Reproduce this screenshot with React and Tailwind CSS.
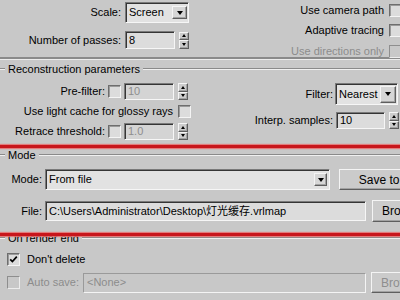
import React from "react";

const sunken =
  "border border-t-[#7a7a7a] border-l-[#7a7a7a] border-b-[#f6f6f6] border-r-[#f6f6f6] shadow-[inset_1px_1px_0_#353535]";
const raised =
  "border border-t-[#f4f4f4] border-l-[#f4f4f4] border-b-[#5e5e5e] border-r-[#5e5e5e] shadow-[inset_-1px_-1px_0_#a2a2a2]";

function Etched({ className = "" }) {
  return (
    <div
      className={
        "h-[2px] border-t border-t-[#8a8a8a] border-b border-b-[#f0f0f0] " +
        className
      }
    />
  );
}

function GroupTitle({ title, className = "" }) {
  return (
    <div className={"flex items-center h-[12px] " + className}>
      <Etched className="w-[5px] shrink-0" />
      <span className="ml-[3px] mr-[3px] whitespace-nowrap">{title}</span>
      <Etched className="flex-1" />
    </div>
  );
}

function Checkbox({ checked = false, disabled = false, className = "" }) {
  return (
    <div
      className={
        "w-[13px] h-[13px] shrink-0 flex items-center justify-center border " +
        (disabled
          ? "border-t-[#8e8e8e] border-l-[#8e8e8e] border-b-[#ececec] border-r-[#ececec] bg-[#c8c8c8] "
          : "border-t-[#6e6e6e] border-l-[#6e6e6e] border-b-[#f4f4f4] border-r-[#f4f4f4] shadow-[inset_1px_1px_0_#9a9a9a] bg-[#dcdcdc] ") +
        className
      }
    >
      {checked && (
        <svg width="9" height="9" viewBox="0 0 9 9">
          <path
            d="M1.2 4.3 L3.4 6.6 L7.8 1.6"
            fill="none"
            stroke="#000"
            strokeWidth="1.7"
          />
        </svg>
      )}
    </div>
  );
}

function DownTri() {
  return (
    <div className="w-0 h-0 border-l-[3.5px] border-r-[3.5px] border-t-[4px] border-l-transparent border-r-transparent border-t-black" />
  );
}

function Dropdown({ value, className = "", arrowClass = "" }) {
  return (
    <div
      className={
        "flex items-center shrink-0 bg-[#e2e2e2] " + sunken + " " + className
      }
    >
      <span className="flex-1 pl-[3px] whitespace-nowrap overflow-hidden">
        {value}
      </span>
      <div
        className={
          "flex items-center justify-center bg-[#d6d6d6] " +
          raised +
          " " +
          arrowClass
        }
      >
        <DownTri />
      </div>
    </div>
  );
}

function Input({ value, disabled = false, className = "" }) {
  return (
    <div
      className={
        "flex items-center shrink-0 pl-[3px] whitespace-nowrap overflow-hidden " +
        sunken +
        " " +
        (disabled ? "bg-[#d4d4d4] text-[#8e8e8e] " : "bg-[#dcdcdc] ") +
        className
      }
    >
      {value}
    </div>
  );
}

function Spinner({ className = "" }) {
  return (
    <div className={"flex flex-col w-[10px] h-[17px] shrink-0 " + className}>
      <div
        className={
          "flex-1 flex items-center justify-center bg-[#cccccc] " + raised
        }
      >
        <div className="w-0 h-0 border-l-[2.5px] border-r-[2.5px] border-b-[3px] border-l-transparent border-r-transparent border-b-black" />
      </div>
      <div
        className={
          "flex-1 flex items-center justify-center bg-[#cccccc] " + raised
        }
      >
        <div className="w-0 h-0 border-l-[2.5px] border-r-[2.5px] border-t-[3px] border-l-transparent border-r-transparent border-t-black" />
      </div>
    </div>
  );
}

function Button({ label, disabled = false, className = "" }) {
  return (
    <div
      className={
        "flex items-center justify-center shrink-0 whitespace-nowrap text-[12px] bg-[#cbcbcb] " +
        raised +
        " " +
        (disabled ? "text-[#8e8e8e] " : "") +
        className
      }
    >
      {label}
    </div>
  );
}

function RedLine({ className = "" }) {
  return (
    <div
      className={
        "absolute left-0 w-[400px] h-[3px] bg-[#c8161c] shadow-[0_0_1px_1px_rgba(232,110,110,0.85)] " +
        className
      }
    />
  );
}

export default function App() {
  return (
    <div className="relative w-[400px] h-[300px] overflow-hidden bg-[#c8c8c8] text-[11px] leading-none text-black font-['Liberation_Sans','Noto_Sans_CJK_SC',sans-serif]">
      {/* top section */}
      <div className="flex h-[57px] w-[402px]">
        <div className="w-[200px] shrink-0 flex flex-col pt-[2px]">
          <div className="flex items-center h-[21px]">
            <span className="w-[121px] text-right">Scale:</span>
            <Dropdown
              value="Screen"
              className="ml-[4px] w-[64px] h-[21px]"
              arrowClass="w-[15px] h-[13px] mr-[1px]"
            />
          </div>
          <div className="flex items-center h-[18px] mt-[8px]">
            <span className="w-[121px] text-right">Number of passes:</span>
            <Input value="8" className="ml-[4px] w-[50px] h-[18px]" />
            <Spinner className="ml-[4px]" />
          </div>
        </div>
        <div className="flex-1 flex flex-col items-end pt-[4px]">
          <div className="flex items-center h-[13px] gap-[5px]">
            <span>Use camera path</span>
            <Checkbox />
          </div>
          <div className="flex items-center h-[13px] gap-[5px] mt-[7px]">
            <span>Adaptive tracing</span>
            <Checkbox />
          </div>
          <div className="flex items-center h-[13px] gap-[5px] mt-[8px]">
            <span className="text-[#8c8c8c]">Use directions only</span>
            <Checkbox disabled />
          </div>
        </div>
      </div>
      <div className="h-[3px] border-t-2 border-t-[#8a8a8a] border-b border-b-[#ececec]" />

      {/* Reconstruction parameters */}
      <GroupTitle title="Reconstruction parameters" className="mt-[3px]" />
      <div className="flex mt-[8px] h-[57px] w-[402px]">
        <div className="w-[200px] shrink-0 flex flex-col">
          <div className="flex items-center h-[17px]">
            <span className="w-[105px] text-right">Pre-filter:</span>
            <Checkbox className="ml-[3px]" />
            <Input value="10" disabled className="ml-[3px] w-[50px] h-[17px]" />
            <Spinner className="ml-[4px]" />
          </div>
          <div className="flex items-center h-[13px] mt-[5px]">
            <span className="w-[173px] text-right">
              Use light cache for glossy rays
            </span>
            <Checkbox className="ml-[5px]" />
          </div>
          <div className="flex items-center h-[17px] mt-[5px]">
            <span className="w-[105px] text-right">Retrace threshold:</span>
            <Checkbox className="ml-[3px]" />
            <Input value="1.0" disabled className="ml-[3px] w-[50px] h-[17px]" />
            <Spinner className="ml-[4px]" />
          </div>
        </div>
        <div className="flex-1 flex flex-col">
          <div className="flex items-center h-[22px]">
            <span className="w-[133px] text-right">Filter:</span>
            <Dropdown
              value="Nearest"
              className="ml-[2px] w-[63px] h-[22px]"
              arrowClass="w-[16px] h-[17px] mr-[1px]"
            />
          </div>
          <div className="flex items-center h-[17px] mt-[7px]">
            <span className="w-[133px] text-right">Interp. samples:</span>
            <Input value="10" className="ml-[3px] w-[49px] h-[17px]" />
            <Spinner className="ml-[4px]" />
          </div>
        </div>
      </div>

      {/* Mode */}
      <GroupTitle title="Mode" className="mt-[9px]" />
      <div className="flex items-center h-[21px] mt-[8px] w-[450px]">
        <span className="w-[42px] text-right">Mode:</span>
        <Dropdown
          value="From file"
          className="ml-[3px] w-[285px] h-[21px]"
          arrowClass="w-[13px] h-[13px] mr-[2px]"
        />
        <Button label="Save to file" className="ml-[9px] w-[99px] h-[21px]" />
      </div>
      <div className="flex items-center h-[22px] mt-[10px] w-[450px]">
        <span className="w-[42px] text-right">File:</span>
        <Input
          value="C:\Users\Administrator\Desktop\灯光缓存.vrlmap"
          className="ml-[3px] w-[321px] h-[20px]"
        />
        <Button label="Browse" className="ml-[6px] w-[60px] h-[22px]" />
      </div>

      {/* On render end */}
      <GroupTitle title="On render end" className="mt-[10px]" />
      <div className="flex items-center h-[13px] mt-[9px]">
        <Checkbox checked className="ml-[7px]" />
        <span className="ml-[7px]">Don't delete</span>
      </div>
      <div className="flex items-center h-[21px] mt-[6px] w-[450px]">
        <Checkbox disabled className="ml-[7px]" />
        <span className="ml-[7px] w-[53px] text-[#8c8c8c]">Auto save:</span>
        <div className="ml-[3px] w-[283px] h-[20px] flex items-center pl-[3px] text-[#8c8c8c] border border-t-[#9a9a9a] border-l-[#9a9a9a] border-b-[#f4f4f4] border-r-[#f4f4f4]">
          &lt;None&gt;
        </div>
        <Button
          label="Browse"
          disabled
          className="ml-[5px] w-[60px] h-[21px]"
        />
      </div>

      <RedLine className="top-[145px]" />
      <RedLine className="top-[233px]" />
    </div>
  );
}
